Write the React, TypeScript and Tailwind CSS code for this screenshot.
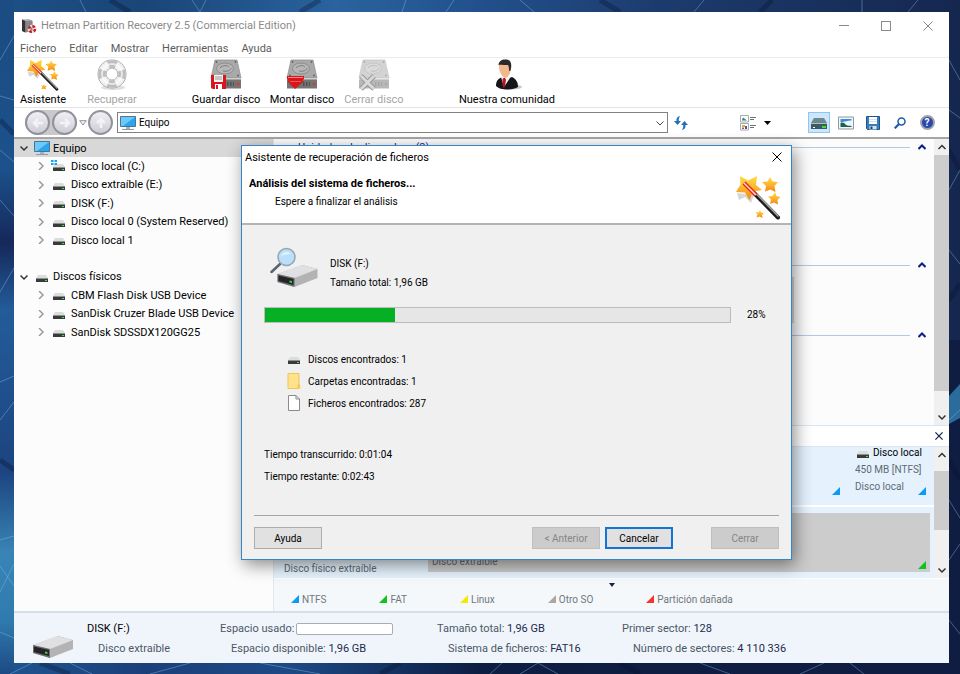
import { FC, ReactNode } from 'react';
import { clsx } from 'clsx';

interface TreeNode {
  label: string;
  system?: boolean;
}

interface LegendItem {
  label: string;
  color: string;
}

const volumes: TreeNode[] = [
  { label: 'Disco local (C:)', system: true },
  { label: 'Disco extraíble (E:)' },
  { label: 'DISK (F:)' },
  { label: 'Disco local 0 (System Reserved)' },
  { label: 'Disco local 1' },
];

const physicalDisks: TreeNode[] = [
  { label: 'CBM Flash Disk USB Device' },
  { label: 'SanDisk Cruzer Blade USB Device' },
  { label: 'SanDisk SDSSDX120GG25' },
];

const legend: LegendItem[] = [
  { label: 'NTFS', color: 'text-[#0a9bf5]' },
  { label: 'FAT', color: 'text-[#0cc41c]' },
  { label: 'Linux', color: 'text-[#f2ea00]' },
  { label: 'Otro SO', color: 'text-[#a8a8a8]' },
  { label: 'Partición dañada', color: 'text-[#f83232]' },
];

const menus = ['Fichero', 'Editar', 'Mostrar', 'Herramientas', 'Ayuda'];

/* ---------- icons ---------- */

const Wallpaper: FC = () => (
  <svg className="absolute inset-0 h-full w-full" viewBox="0 0 960 674" preserveAspectRatio="none" aria-hidden="true">
    <defs>
      <linearGradient id="sky" x1="0" y1="0" x2="1" y2="0">
        <stop offset="0" stopColor="#1d5086" />
        <stop offset="0.15" stopColor="#1a4577" />
        <stop offset="0.35" stopColor="#2a639f" />
        <stop offset="0.5" stopColor="#22508c" />
        <stop offset="0.7" stopColor="#1c3a6b" />
        <stop offset="1" stopColor="#15274f" />
      </linearGradient>
      <linearGradient id="floor" x1="0" y1="0" x2="1" y2="0">
        <stop offset="0" stopColor="#1f5590" />
        <stop offset="0.15" stopColor="#1b3f7a" />
        <stop offset="0.3" stopColor="#1c4a85" />
        <stop offset="0.5" stopColor="#0d1d42" />
        <stop offset="1" stopColor="#101d42" />
      </linearGradient>
      <linearGradient id="side" x1="0" y1="0" x2="0" y2="1">
        <stop offset="0" stopColor="#1b4c82" />
        <stop offset="0.25" stopColor="#1c518c" />
        <stop offset="0.36" stopColor="#15285a" />
        <stop offset="0.46" stopColor="#235c9a" />
        <stop offset="0.7" stopColor="#1c4480" />
        <stop offset="0.82" stopColor="#3984b6" />
        <stop offset="0.92" stopColor="#2f7bae" />
        <stop offset="1" stopColor="#1d4a85" />
      </linearGradient>
    </defs>
    <rect width="960" height="340" fill="url(#sky)" />
    <rect y="340" width="960" height="334" fill="url(#floor)" />
    <rect width="14" height="674" fill="url(#side)" />
    <path d="M949 396l11-12v34l-11 6z" fill="#2c6c9c" />
    <g fill="none" stroke="#8cc4ea" strokeOpacity="0.4">
      <path d="M80 0l6 12M192 0l8 12 6-12M402 12l4-12M446 12l8-12M520 0l14 12M694 12l10-12M862 0v12M908 12l10-12" />
      <path d="M0 96l14 4M0 60l14-24M0 150l14 12M0 200l14 16M0 292l14-24M0 382l14-6M0 420l14-18M0 540l14-4M0 566l14 20M0 592l14-28M0 632l14 6" />
      <path d="M10 674l22-11M70 663l22 11M150 674l40-11M260 663l60 11M490 674l12-11M520 674l18-11 20 11M700 663l30 11M800 674l24-11M850 663l14 11" />
      <path d="M949 60l11 20M949 110l11 8M949 190l11-20M949 250l11 14M949 420l11-10M949 500l11 18M949 560l11-16M949 620l11 14" />
    </g>
    <g fill="none" stroke="#050e28" strokeOpacity="0.3" strokeWidth="5">
      <path d="M110 0l20 12M300 12l20-12M600 0l20 12M760 12l12-12M0 120l14 14M0 460l14 10M40 663l30 11M380 674l20-11M620 663l20 11M949 150l11 20M949 300l11-16M949 460l11 20" />
    </g>
  </svg>
);

const AppLogo: FC = () => (
  <svg className="h-4 w-4" viewBox="0 0 16 16" aria-hidden="true">
    <path d="M1 1.500L8 1l4 2v10l-8 1.500L1 13z" fill="#b5b5b7" />
    <path d="M1 1.500L4.500 3v11.500L1 13z" fill="#333336" />
    <path d="M4.500 3L11 2.500V12l-6.500 2.500z" fill="#85858a" />
    <circle cx="11" cy="11" r="3" fill="none" stroke="#f1dedd" strokeWidth="2.600" />
    <circle cx="11" cy="11" r="3" fill="none" stroke="#c5221d" strokeWidth="2.600" strokeDasharray="2.700 2.012" />
  </svg>
);

const WandIcon: FC<{ className: string }> = ({ className }) => (
  <svg className={className} viewBox="0 0 45 45" aria-hidden="true">
    <defs>
      <linearGradient id="star" x1="0" y1="0" x2="0" y2="1">
        <stop offset="0" stopColor="#ffdc4a" />
        <stop offset="0.5" stopColor="#fdb52c" />
        <stop offset="1" stopColor="#f2840f" />
      </linearGradient>
    </defs>
    <path d="M1 18l2 7 6-3 6 6 3-8z" fill="#000" opacity="0.16" />
    <path d="M4 1l8 4.500L21 1l-1 9 6 5-9 1.500L13.500 25 9 17.500 0 17l4.500-7.500z" fill="url(#star)" />
    <path d="M34 2l2.500 4.500 5.500.5-3.500 4 1 6-5-2.500-5.500 2L30 11l-4-4 5.500-.5z" fill="url(#star)" />
    <path d="M39 17l1.500 4 4 1-3 3 .5 4.500-4-2-4 1.500 1-4.500-3-3 4.500-.5z" fill="url(#star)" />
    <path d="M24 35l1 2.500 3 .5-2 2 .5 3-3-1.500-3 1 1-3-2-2.500 3 .5z" fill="url(#star)" />
    <path d="M18 18l24 24.500" stroke="#1b1b1b" strokeWidth="4" strokeLinecap="round" />
    <path d="M19 17.500l23.500 24" stroke="#a5a5a5" strokeWidth="1.500" />
    <path d="M8 8l12 12" stroke="#e3201b" strokeWidth="4" />
    <path d="M8 8l12 12" stroke="#ffd9c8" strokeWidth="1.500" />
  </svg>
);

const LifebuoyIcon: FC = () => (
  <svg className="h-8 w-8" viewBox="0 0 32 32" aria-hidden="true">
    <ellipse cx="17" cy="28.500" rx="12" ry="2.500" fill="#dedede" />
    <circle cx="16" cy="15" r="10" fill="none" stroke="#a8a8a8" strokeWidth="9" />
    <circle cx="16" cy="15" r="10" fill="none" stroke="#f2f2f2" strokeWidth="7.500" />
    <circle cx="16" cy="15" r="10" fill="none" stroke="#bdbdbd" strokeWidth="7.500" strokeDasharray="7.850 7.850" strokeDashoffset="3.900" />
    <circle cx="16" cy="15" r="10" fill="none" stroke="#fff" strokeWidth="2" strokeOpacity="0.6" />
  </svg>
);

const HardDriveIcon: FC<{ faded?: boolean; children: ReactNode }> = ({ faded, children }) => (
  <svg className={clsx('h-8 w-8', faded && 'opacity-50 grayscale')} viewBox="0 0 32 32" aria-hidden="true">
    <path d="M5 1h22l4 18H1z" fill="#a9a9a9" stroke="#8b8b8b" strokeWidth="0.700" />
    <path d="M1 19h30v10.500H1z" fill="#747474" />
    <path d="M1 19h30v1.500H1z" fill="#d0d0d0" />
    <ellipse cx="15" cy="9.500" rx="8.500" ry="5.500" fill="#b6b6b6" stroke="#8d8d8d" />
    <path d="M10 9c2-3 8-3 9-1M13 12c4 1 8-1 8-3" fill="none" stroke="#7c7c7c" />
    <g fill="#606060">
      <circle cx="6.500" cy="3" r="0.900" />
      <circle cx="25.500" cy="3" r="0.900" />
      <circle cx="4" cy="16.500" r="0.900" />
      <circle cx="28" cy="16.500" r="0.900" />
    </g>
    <path d="M17 23h1.500v4H17zM20 23h1.500v4H20zM23 23h1v4h-1z" fill="#505050" />
    <circle cx="28" cy="25" r="1.300" fill="#f03025" />
    {children}
  </svg>
);

const PersonIcon: FC = () => (
  <svg className="h-8 w-8" viewBox="0 0 32 32" aria-hidden="true">
    <ellipse cx="21" cy="28" rx="10" ry="2.500" fill="#c9c9c9" />
    <path d="M5 27c0-6 3-8 7-9l4 2 5-2c4 2 6 5 6 10-5 3.500-18 3.500-22-1z" fill="#16161a" />
    <path d="M10 18l3 10 6-9-2-2z" fill="#f4f4f4" />
    <path d="M11.500 20l2-1.500 1.500 2-1 7-1.500 1.500-1-3z" fill="#b8161d" />
    <path d="M8 5c1-3 11-3 12 1 .5 5-1 11-5.500 13-4-1-7-7-6.500-14z" fill="#f3b98e" />
    <path d="M7.500 6c0-4 4-6 7.500-5.500 4.500 0 6.500 4 4.500 11l-1.500.5c0-3 0-4-1-6-3 .5-6-1-9.500 0z" fill="#2a2a2e" />
  </svg>
);

const MonitorIcon: FC = () => (
  <svg className="h-4 w-4 shrink-0" viewBox="0 0 16 16" aria-hidden="true">
    <path d="M.5 1.500h15v10H.5z" fill="#2aa5ee" stroke="#4a7690" />
    <path d="M1 2h14L3 11H1z" fill="#6cc9fb" />
    <path d="M6 12h4v2H6z" fill="#9fb4c0" />
    <path d="M2 14h12v1H2z" fill="#8a9ba6" />
  </svg>
);

const DriveSmallIcon: FC<{ system?: boolean }> = ({ system }) => (
  <svg className="h-3 w-4 shrink-0" viewBox="0 0 16 12" aria-hidden="true">
    <path d="M4 4h8l2 3H2z" fill="#dcdcdc" />
    <path d="M2 7h12v4H2z" fill="#3a3a3a" />
    <path d="M2 7h12v1H2z" fill="#8f8f8f" />
    <path d="M11 9h2v1h-2z" fill="#3fe04b" />
    {system && <path d="M0 0h2.500v2H0zM3.500 0H6v2H3.500zM0 3h2.500v2H0zM3.500 3H6v2H3.500z" fill="#12a3ee" />}
  </svg>
);

const DriveBody: FC = () => (
  <g>
    <path d="M0 9l25-9 15 4v9L17 22 0 17z" fill="#b3b3b5" />
    <path d="M0 9L24 0l16 4-23 9z" fill="#e0e0e2" />
    <path d="M0 9l17 4v9L0 17z" fill="#6f6f71" />
    <path d="M1 10.500l15 3.500v6L1 16z" fill="#242426" />
    <path d="M12 15.500l2.500.6v2L12 17.500z" fill="#35d83f" />
  </g>
);

const ScanDriveIcon: FC = () => (
  <svg className="h-[42px] w-12 shrink-0" viewBox="0 0 48 42" aria-hidden="true">
    <g transform="translate(7.500 18)">
      <DriveBody />
    </g>
    <path d="M10 17l-8.500 8" stroke="#59646d" strokeWidth="2.500" strokeLinecap="round" />
    <circle cx="16.500" cy="10" r="8.500" fill="#b9dff9" stroke="#95a5b2" strokeWidth="1.500" />
    <path d="M11 9c1-4 7-6 10-2-3 0-7 1-10 2z" fill="#dff1fe" />
  </svg>
);

const Chevron: FC<{ dir: 'up' | 'down' | 'right'; className?: string }> = ({ dir, className }) => (
  <svg className={clsx('h-2 w-2 shrink-0', className)} viewBox="0 0 8 8" fill="none" stroke="currentColor" aria-hidden="true">
    {dir === 'up' && <path d="M.5 6L4 2.500 7.500 6" />}
    {dir === 'down' && <path d="M.5 2.500L4 6l3.500-3.500" />}
    {dir === 'right' && <path d="M2 0l4 4-4 4" />}
  </svg>
);

const CloseIcon: FC<{ className: string }> = ({ className }) => (
  <svg className={className} viewBox="0 0 10 10" fill="none" stroke="currentColor" aria-hidden="true">
    <path d="M.5.5l9 9M9.500.5l-9 9" />
  </svg>
);

const Corner: FC<{ className?: string }> = ({ className }) => (
  <svg className={clsx('h-[9px] w-[9px] shrink-0', className)} viewBox="0 0 9 9" aria-hidden="true">
    <path d="M9 0v8H1z" fill="currentColor" />
  </svg>
);

/* ---------- window pieces ---------- */

const TitleBar: FC = () => (
  <header className="flex h-[27px] items-center pl-[7px] text-[#8a8a8a]">
    <AppLogo />
    <h1 className="ml-1 flex-1">Hetman Partition Recovery 2.5 (Commercial Edition)</h1>
    <button aria-label="Minimizar" className="flex h-6 w-[42px] items-center justify-center">
      <span className="h-px w-2.5 bg-[#8a8a8a]" />
    </button>
    <button aria-label="Maximizar" className="flex h-6 w-[42px] items-center justify-center">
      <span className="h-2.5 w-2.5 border border-[#8a8a8a]" />
    </button>
    <button aria-label="Cerrar ventana" className="flex h-6 w-[42px] items-center justify-center">
      <CloseIcon className="h-2.5 w-2.5" />
    </button>
  </header>
);

const MenuBar: FC = () => (
  <nav className="flex h-[19px] items-center gap-[13px] border-b border-[#ececec] pl-1.5 text-[#5c5c5c]">
    {menus.map((menu) => (
      <button key={menu}>{menu}</button>
    ))}
  </nav>
);

const ToolButton: FC<{ label: string; disabled?: boolean; className: string; children: ReactNode }> = ({
  label,
  disabled,
  className,
  children,
}) => (
  <button disabled={disabled} className={clsx('flex shrink-0 flex-col items-center whitespace-nowrap disabled:text-[#a5a5a5]', className)}>
    {children}
    <span>{label}</span>
  </button>
);

const Toolbar: FC = () => (
  <div className="flex h-[50px] items-start border-b border-[#e4e4e4] pt-px">
    <ToolButton label="Asistente" className="w-[58px]">
      <WandIcon className="h-8 w-8" />
    </ToolButton>
    <ToolButton label="Recuperar" disabled className="w-20">
      <LifebuoyIcon />
    </ToolButton>
    <ToolButton label="Guardar disco" className="ml-9 w-[76px]">
      <HardDriveIcon>
        <path d="M1 16h15v14H3l-2-2z" fill="#d8161b" />
        <path d="M4 16h9v7H4z" fill="#f3f3f3" />
        <path d="M5 18h7M5 20h7" stroke="#9a9a9a" />
        <path d="M5 25h7v5H5z" fill="#fff" />
        <path d="M6 26h2v4H6z" fill="#d8161b" />
      </HardDriveIcon>
    </ToolButton>
    <ToolButton label="Montar disco" className="w-[76px]">
      <HardDriveIcon>
        <path d="M1 17h17v3l-2 2h2l-9 8-8-8h2l-2-2z" fill="#d8161b" />
        <path d="M2 18.500h15" stroke="#f78a84" />
        <path d="M4 22.500h11" stroke="#ee5650" />
      </HardDriveIcon>
    </ToolButton>
    <ToolButton label="Cerrar disco" disabled className="w-[68px]">
      <HardDriveIcon faded>
        <path d="M3 17l13 13M16 17L3 30" stroke="#333" strokeWidth="5" />
        <path d="M3 17l13 13M16 17L3 30" stroke="#b5b5b5" strokeWidth="3" />
      </HardDriveIcon>
    </ToolButton>
    <ToolButton label="Nuestra comunidad" className="ml-[45px] w-[108px]">
      <PersonIcon />
    </ToolButton>
  </div>
);

const RoundButton: FC<{ label: string; children: ReactNode }> = ({ label, children }) => (
  <button
    aria-label={label}
    className="flex h-[25px] w-[25px] items-center justify-center rounded-full border-2 border-[#92929c] bg-linear-to-b from-[#f0f0f4] to-[#cdcdd6]"
  >
    <svg className="h-3.5 w-3.5" viewBox="0 0 14 14" fill="none" stroke="#f3f3f7" strokeWidth="2.500" aria-hidden="true">
      {children}
    </svg>
  </button>
);

const AddressBar: FC = () => (
  <div className="flex h-[31px] items-center border-b-2 border-[#a6a6a6] pr-[11px] pl-[11px]">
    <div className="flex gap-0.5 rounded-full bg-[#c9c9cc]">
      <RoundButton label="Atrás">
        <path d="M12 7H4M7 3L3 7l4 4" />
      </RoundButton>
      <RoundButton label="Adelante">
        <path d="M2 7h8M7 3l4 4-4 4" />
      </RoundButton>
    </div>
    <button aria-label="Historial" className="flex w-[11px] justify-center">
      <svg className="h-1.5 w-2" viewBox="0 0 8 6" fill="#f4f4f6" stroke="#8f8f9a" aria-hidden="true">
        <path d="M.7.7h6.600L4 5z" />
      </svg>
    </button>
    <RoundButton label="Subir">
      <path d="M7 12V4M3 7l4-4 4 4" />
    </RoundButton>
    <div className="relative ml-1 flex-1">
      <select
        aria-label="Ubicación"
        className="block h-[21px] w-full appearance-none rounded-none border border-[#828282] bg-white pl-[21px] text-[10px] text-black"
      >
        <option>Equipo</option>
      </select>
      <span className="pointer-events-none absolute top-[3px] left-[3px]">
        <MonitorIcon />
      </span>
      <Chevron dir="down" className="pointer-events-none absolute top-[7px] right-1 text-[#444]" />
    </div>
    <button aria-label="Actualizar" className="ml-1.5">
      <svg className="h-3.5 w-3.5" viewBox="0 0 14 14" fill="#2470b8" aria-hidden="true">
        <path d="M6 0C3 .5 2.300 2.500 2.500 5H0l3.500 4L7 5H4.800C4.600 3 5 1.500 6 0z" />
        <path d="M8 14c3-.5 3.700-2.500 3.500-5H14l-3.500-4L7 9h2.200c.2 2-.2 3.500-1.200 5z" />
      </svg>
    </button>
    <button aria-label="Vista" className="ml-[52px] flex items-center gap-2">
      <svg className="h-4 w-4" viewBox="0 0 16 16" aria-hidden="true">
        <path d="M.5.5h8v6.500h-8zM.5 8.500h8V15h-8z" fill="#fff" stroke="#a3acb5" />
        <path d="M2 5l1-2.500L5 4l2 1.500H2z" fill="#2d8a66" />
        <path d="M2 10h3v2H2z" fill="#e0b520" />
        <path d="M5 11h2v3H5z" fill="#5648c4" />
        <path d="M2 12.500h2V14H2z" fill="#d6404a" />
        <path d="M10 2.500h6M10 4.500h4M10 10.500h6M10 12.500h4" stroke="#67717b" />
      </svg>
      <svg className="h-1 w-[7px]" viewBox="0 0 7 4" aria-hidden="true">
        <path d="M0 0h7L3.500 4z" />
      </svg>
    </button>
    <div className="ml-[37px] flex items-center gap-[5px]">
      <button aria-label="Discos" className="flex h-[21px] w-[22px] items-center justify-center border border-[#8cc6f3] bg-[#cce6fb]">
        <svg className="h-4 w-4" viewBox="0 0 16 16" aria-hidden="true">
          <path d="M3 3h10l3 5H0z" fill="#6b8790" />
          <path d="M0 8h16v6H0z" fill="#3d5a62" />
          <path d="M0 8h16v1H0z" fill="#a9bfc6" />
          <path d="M2 12h2v1H2z" fill="#fff" />
          <path d="M11 11h4v2h-4z" fill="#43dc35" />
        </svg>
      </button>
      <button aria-label="Vista previa" className="flex h-[21px] w-[22px] items-center justify-center">
        <svg className="h-4 w-4" viewBox="0 0 16 16" aria-hidden="true">
          <path d="M.5 2h15v12H.5z" fill="#f3f6f9" stroke="#8c99a6" />
          <path d="M2.500 4h11v8h-11z" fill="#e9f4fc" />
          <path d="M2.500 4h11v1.500c-4 0-6 1.500-11 1.500z" fill="#3c8fd6" />
          <path d="M2.500 8c2-1 4 0 5 1.500s4 1 6 1.500v1h-11z" fill="#1f5f51" />
        </svg>
      </button>
      <button aria-label="Guardar" className="flex h-[21px] w-[22px] items-center justify-center">
        <svg className="h-3.5 w-3.5" viewBox="0 0 14 14" aria-hidden="true">
          <path d="M.5.5h13v13h-12l-1-1z" fill="#3b7cbd" stroke="#1f568f" />
          <path d="M3 1h8v7H3z" fill="#fff" />
          <path d="M3 3.500h8M3 5.500h8" stroke="#d5e1ec" />
          <path d="M3.500 10h7v3.500h-7z" fill="#d6e2ed" />
          <path d="M4.500 10.500h2V13h-2z" fill="#17406e" />
        </svg>
      </button>
      <button aria-label="Buscar" className="flex h-[21px] w-[22px] items-center justify-center">
        <svg className="h-3 w-3" viewBox="0 0 12 12" fill="none" stroke="#1f5aa6" aria-hidden="true">
          <circle cx="7.500" cy="4.500" r="3.500" strokeWidth="1.500" />
          <path d="M5 7l-4.300 4.300" strokeWidth="2.200" />
        </svg>
      </button>
      <button aria-label="Acerca de" className="flex h-[21px] w-[22px] items-center justify-center">
        <span className="flex h-[15px] w-[15px] items-center justify-center rounded-full border-2 border-[#a2a2ad] bg-[#2848ab] text-[10px] leading-none font-bold text-white">
          ?
        </span>
      </button>
    </div>
  </div>
);

const TreeBranch: FC<{ nodes: TreeNode[] }> = ({ nodes }) => (
  <ul>
    {nodes.map((node) => (
      <li key={node.label} className="flex h-[18px] items-center pl-[23px] even:h-[19px]">
        <Chevron dir="right" className="stroke-[1.5] text-[#9a9a9a]" />
        <span className="mr-1 ml-1.5">
          <DriveSmallIcon system={node.system} />
        </span>
        <span className="whitespace-nowrap">{node.label}</span>
      </li>
    ))}
  </ul>
);

const Sidebar: FC = () => (
  <aside className="w-[260px] shrink-0 border-r border-[#e1e8ee] bg-[#fcfcfc] text-black">
    <div className="flex h-[18px] items-center bg-[#d8d8d8] pl-1.5">
      <Chevron dir="down" className="stroke-[1.5] text-[#333]" />
      <span className="mr-[3px] ml-1.5">
        <MonitorIcon />
      </span>
      <span>Equipo</span>
    </div>
    <TreeBranch nodes={volumes} />
    <div className="mt-[18px] flex h-[19px] items-center pl-1.5">
      <Chevron dir="down" className="stroke-[1.5] text-[#333]" />
      <span className="mr-[3px] ml-1.5">
        <DriveSmallIcon />
      </span>
      <span>Discos físicos</span>
    </div>
    <TreeBranch nodes={physicalDisks} />
  </aside>
);

const ScrollBar: FC<{ thumb: string }> = ({ thumb }) => (
  <div className="flex w-[15px] shrink-0 flex-col items-center bg-[#f0f0f0]" aria-hidden="true">
    <Chevron dir="up" className="my-1 stroke-[1.5] text-[#333]" />
    <div className={clsx('w-full bg-[#cdcdcd]', thumb)} />
    <Chevron dir="down" className="mt-auto mb-1 stroke-[1.5] text-[#333]" />
  </div>
);

const GroupHeading: FC<{ label?: string }> = ({ label }) => (
  <div className="flex h-4 items-center gap-2 pr-2 pl-6 text-[#1f2f86]">
    {label && <h2>{label}</h2>}
    <span className="h-px flex-1 bg-[#b9c5e4]" />
    <Chevron dir="up" className="stroke-2 text-[#0c1d85]" />
  </div>
);

const DriveGroups: FC = () => (
  <section className="flex min-h-[287px] flex-1 border-b border-[#d9e7f2]">
    <div className="flex-1 bg-[#fcfcfc]">
      <div className="h-[118px]">
        <GroupHeading label="Unidades de disco duro (3)" />
      </div>
      <div className="h-[70px]">
        <GroupHeading />
        <div className="mt-1 ml-6 h-[46px] w-[496px] bg-[#d9d9d9]" />
      </div>
      <GroupHeading />
    </div>
    <ScrollBar thumb="h-[236px]" />
  </section>
);

const PartitionMap: FC = () => (
  <section className="flex text-[10px]">
    <div className="flex-1 bg-white text-[#5e6a74]">
      <div className="flex h-[58px] justify-end gap-[15px] bg-[#e5f2fd] pr-2">
        <Corner className="mt-10 text-[#0a9bf5]" />
        <div className="relative w-[71px] leading-[17px] whitespace-nowrap">
          <p className="-mt-[3px] flex items-center gap-0.5 text-black">
            <DriveSmallIcon />
            Disco local
          </p>
          <p>450 MB [NTFS]</p>
          <p>Disco local</p>
          <Corner className="absolute right-0 bottom-[9px] text-[#0a9bf5]" />
        </div>
      </div>
      <div className="mt-0.5 flex h-[71px] bg-[#e5f2fd] pt-[6px] pr-1 pb-1.5 pl-2.5">
        <p className="w-36 shrink-0 pt-[47px]">Disco físico extraíble</p>
        <div className="relative flex-1 bg-[#cccccc] pt-10 pl-1">
          <p>Disco extraíble</p>
          <Corner className="absolute right-1 bottom-0.5 text-[#0cc41c]" />
        </div>
      </div>
    </div>
    <ScrollBar thumb="mt-2 h-[59px]" />
  </section>
);

const Legend: FC = () => (
  <footer className="border-t border-white bg-[#f4f8fb] text-[10px] text-[#70777d]">
    <svg className="mx-auto mt-1 h-1 w-1.5" viewBox="0 0 6 4" aria-hidden="true">
      <path d="M0 0h6L3 4z" fill="#12224c" />
    </svg>
    <ul className="flex h-6 items-center gap-[52px] pl-4">
      {legend.map(({ label, color }) => (
        <li key={label} className="flex items-center gap-[3px] whitespace-nowrap">
          <Corner className={color} />
          {label}
        </li>
      ))}
    </ul>
  </footer>
);

const Stat: FC<{ label: string; value: string; indent?: boolean }> = ({ label, value, indent }) => (
  <p className={clsx('whitespace-nowrap', indent && 'pl-[11px]')}>
    {label} <span className="text-[#1d2b4c]">{value}</span>
  </p>
);

const StatusBar: FC = () => (
  <footer className="grid h-[52px] grid-cols-[73px_133px_217px_185px_1fr] border-t-2 border-[#d3dfe9] bg-[#f0f5fc] pt-1.5 leading-5 text-[#4c5866]">
    <svg className="mt-[17px] ml-[19px] h-[22px] w-10" viewBox="0 0 40 22" aria-hidden="true">
      <DriveBody />
    </svg>
    <div>
      <p className="text-black">DISK (F:)</p>
      <p className="pl-[11px]">Disco extraíble</p>
    </div>
    <div>
      <div className="flex items-center gap-0.5">
        <span>Espacio usado:</span>
        <span className="h-3 w-[97px] rounded-xs border border-[#a9adb2] bg-white" role="meter" aria-label="Espacio usado" aria-valuenow={0} />
      </div>
      <Stat label="Espacio disponible:" value="1,96 GB" indent />
    </div>
    <div>
      <Stat label="Tamaño total:" value="1,96 GB" />
      <Stat label="Sistema de ficheros:" value="FAT16" indent />
    </div>
    <div>
      <Stat label="Primer sector:" value="128" />
      <Stat label="Número de sectores:" value="4 110 336" indent />
    </div>
  </footer>
);

/* ---------- wizard dialog ---------- */

const DialogButton: FC<{ label: string; disabled?: boolean; focused?: boolean; className?: string }> = ({
  label,
  disabled,
  focused,
  className,
}) => (
  <button
    disabled={disabled}
    className={clsx(
      'flex h-[22px] w-[68px] items-center justify-center',
      focused ? 'border-2 border-[#1374d6]' : 'border',
      disabled ? 'border-[#bfbfbf] bg-[#cccccc] text-[#868686]' : 'bg-[#e1e1e1] text-black',
      !disabled && !focused && 'border-[#adadad]',
      className
    )}
  >
    {label}
  </button>
);

const FoundItem: FC<{ label: string; count: number; children: ReactNode }> = ({ label, count, children }) => (
  <li className="flex h-[22px] items-center gap-1.5">
    <span className="flex w-4 justify-center">{children}</span>
    {label}: {count}
  </li>
);

const RecoveryDialog: FC<{ progress: number }> = ({ progress }) => (
  <div
    role="dialog"
    aria-labelledby="wizard-title"
    className="absolute top-[133px] left-[227px] w-[551px] border border-[#3585cb] bg-[#f0f0f0] text-[10px] text-black shadow-[3px_5px_16px_rgba(0,0,0,0.45)]"
  >
    <div className="border-b-2 border-[#b4b4b4] bg-white">
      <div className="flex h-[22px] items-center justify-between pr-[9px] pl-[3px]">
        <h2 id="wizard-title" className="text-[11px] leading-[17px]">
          Asistente de recuperación de ficheros
        </h2>
        <button aria-label="Cerrar asistente">
          <CloseIcon className="h-2.5 w-2.5" />
        </button>
      </div>
      <div className="flex h-[55px] justify-between pr-2.5 pl-[7px]">
        <div className="pt-[7px]">
          <h3 className="text-[11px] leading-[18px] font-bold">Análisis del sistema de ficheros...</h3>
          <p className="pl-[26px] leading-[18px]">Espere a finalizar el análisis</p>
        </div>
        <WandIcon className="mt-[7px] h-[45px] w-[45px]" />
      </div>
    </div>

    <div className="px-3 pt-[22px] pb-2.5">
      <div className="flex pl-4">
        <ScanDriveIcon />
        <div className="ml-3 pt-[7px] leading-[19px]">
          <p>DISK (F:)</p>
          <p>Tamaño total: 1,96 GB</p>
        </div>
      </div>

      <div className="mt-[15px] flex items-center pr-2 pl-2.5">
        <div
          role="progressbar"
          aria-label="Análisis"
          aria-valuenow={progress}
          className="h-4 flex-1 border border-[#bcbcbc] bg-[#e6e6e6]"
        >
          <div className="h-full bg-[#06b025]" style={{ width: `${progress}%` }} />
        </div>
        <span className="ml-4 w-6 leading-4">{progress}%</span>
      </div>

      <ul className="mt-[25px] pl-8">
        <FoundItem label="Discos encontrados" count={1}>
          <DriveSmallIcon />
        </FoundItem>
        <FoundItem label="Carpetas encontradas" count={1}>
          <svg className="h-4 w-3.5" viewBox="0 0 14 16" aria-hidden="true">
            <path d="M1 .5h11v10l1 4-1 1H1z" fill="#ffe28a" stroke="#eec655" />
            <path d="M11.500 9l1 6.500h-2.500z" fill="#f6c945" />
          </svg>
        </FoundItem>
        <FoundItem label="Ficheros encontrados" count={287}>
          <svg className="h-4 w-3" viewBox="0 0 12 16" aria-hidden="true">
            <path d="M.5.5h7.500l3.500 3.500v11.500H.5z" fill="#fff" stroke="#8b8b8b" />
            <path d="M8 .5V4h3.500" fill="none" stroke="#8b8b8b" />
          </svg>
        </FoundItem>
      </ul>

      <div className="mt-[30px] pl-2.5 leading-[22px]">
        <p>Tiempo transcurrido: 0:01:04</p>
        <p>Tiempo restante: 0:02:43</p>
      </div>

      <div className="mt-[27px] flex border-t border-[#a5a5a5] pt-[11px]">
        <DialogButton label="Ayuda" />
        <DialogButton label="< Anterior" disabled className="ml-auto" />
        <DialogButton label="Cancelar" focused className="ml-[5px]" />
        <DialogButton label="Cerrar" disabled className="ml-[38px]" />
      </div>
    </div>
  </div>
);

const App: FC = () => (
  <div className="relative flex min-h-screen bg-[#14305c] pt-3 pr-[11px] pb-[11px] pl-3.5 font-[Roboto,'Noto_Sans',sans-serif] text-[11px] leading-[17px]">
    <Wallpaper />
    <main className="relative flex min-w-0 flex-1 flex-col bg-white">
      <TitleBar />
      <MenuBar />
      <Toolbar />
      <AddressBar />
      <div className="flex flex-1">
        <Sidebar />
        <div className="flex min-w-0 flex-1 flex-col">
          <DriveGroups />
          <div className="flex h-[21px] items-center justify-end border-b border-[#d9e7f2] pr-1.5 text-[#12224c]">
            <button aria-label="Cerrar panel">
              <CloseIcon className="h-2 w-2 stroke-[1.5]" />
            </button>
          </div>
          <PartitionMap />
          <Legend />
        </div>
      </div>
      <StatusBar />
      <RecoveryDialog progress={28} />
    </main>
  </div>
);

export default App;
